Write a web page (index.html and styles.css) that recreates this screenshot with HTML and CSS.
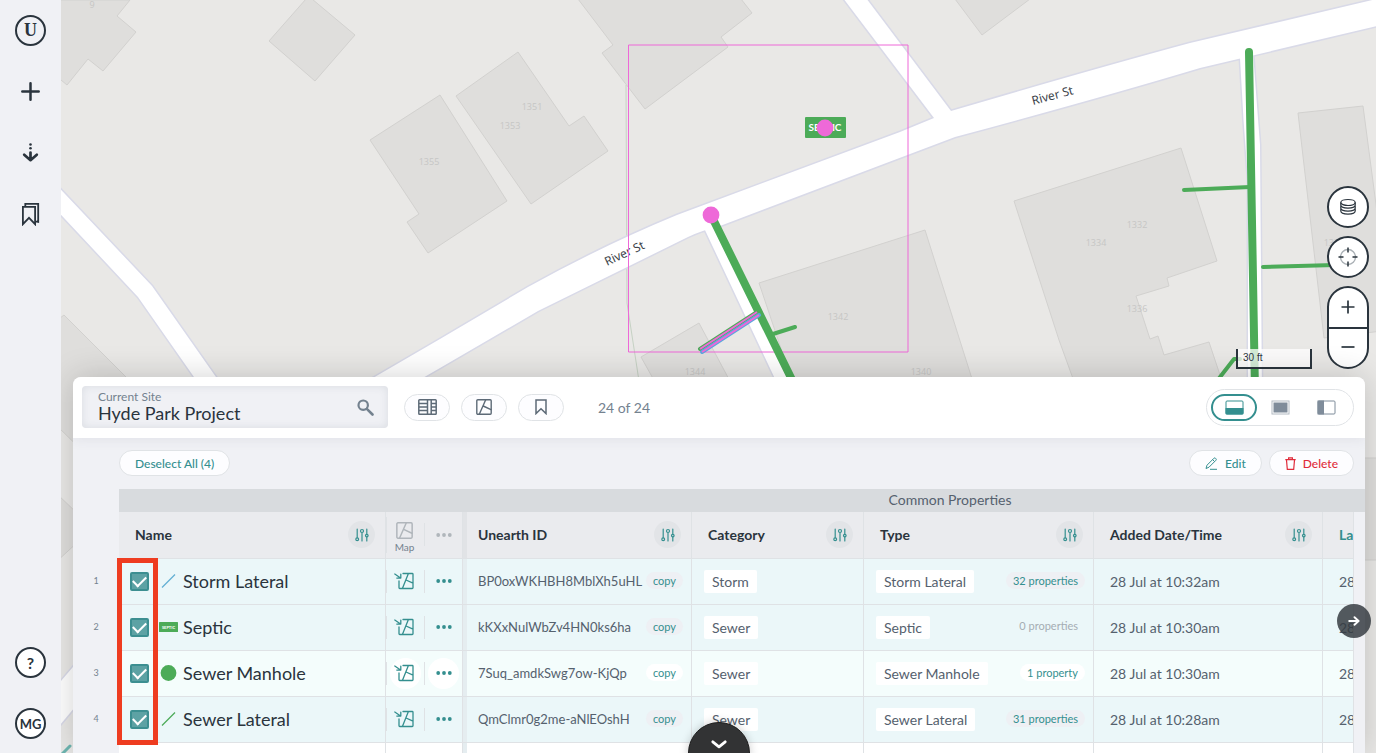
FILE: index.html
```html
<!DOCTYPE html>
<html lang="en">
<head>
<meta charset="utf-8">
<title>Hyde Park Project</title>
<link rel="stylesheet" href="styles.css">
</head>
<body>
<svg class="defs" aria-hidden="true">
  <symbol id="filter" viewBox="0 0 14 14"><g fill="none" stroke="currentColor" stroke-width="1.2" stroke-linecap="round"><path d="M2.2 1v8.6M7 5.2V13M11.8 1v5M11.8 9v4"/><circle cx="2.2" cy="11.2" r="1.4"/><circle cx="7" cy="3" r="1.5"/><circle cx="11.8" cy="7.6" r="1.3"/></g></symbol>
  <symbol id="map" viewBox="0 0 16 16"><g fill="none" stroke="currentColor" stroke-width="1.4" stroke-linejoin="round" stroke-linecap="round"><rect x=".8" y=".8" width="14.4" height="14.4" rx="1"/><path d="M9.6 1 3.4 15M7.2 7 15 10.6"/></g></symbol>
  <symbol id="locate" viewBox="0 0 20 18"><g fill="none" stroke="currentColor" stroke-width="1.3" stroke-linejoin="round" stroke-linecap="round"><path d="M9 1.5h9.2q.8 0 .8.8v13.4q0 .8-.8.8H5.800q-.8 0-.8-.8V9M14.300 1.700 8.500 16.300M12 8 19 11.200M.8 2l5.400 3.700M6.800 2.200v3.900H2.800"/></g></symbol>
  <symbol id="dots" viewBox="0 0 16 4"><g fill="currentColor"><circle cx="2.200" cy="2" r="1.900"/><circle cx="8" cy="2" r="1.900"/><circle cx="13.800" cy="2" r="1.900"/></g></symbol>
</svg>
<div class="app">
  <nav class="rail" aria-label="Main">
    <button class="rail-btn ring logo" aria-label="Home">U</button>
    <button class="rail-btn" aria-label="Add"><svg width="19" height="19" viewBox="0 0 19 19"><path d="M9.500 1.300v16.400M1.300 9.500h16.400" stroke="currentColor" stroke-width="2.500" stroke-linecap="round"/></svg></button>
    <button class="rail-btn" aria-label="Import"><svg width="17" height="19" viewBox="0 0 17 19"><g fill="currentColor"><circle cx="8.500" cy="1.500" r="1.300"/><circle cx="8.500" cy="5.200" r="1.300"/></g><path d="M8.500 9.500v7.500M2.200 11.700 8.500 17.200l6.300-5.500" fill="none" stroke="currentColor" stroke-width="2.700" stroke-linecap="round" stroke-linejoin="round"/></svg></button>
    <button class="rail-btn" aria-label="Bookmarks"><svg width="19" height="25" viewBox="0 0 19 25"><path d="M1.900 5.800h12.200v17.400L8 16.800l-6.100 6.400zM4.300 5.500V2.900H17.200V20.800l-2.700-.5" fill="none" stroke="currentColor" stroke-width="1.800"/></svg></button>
    <span class="space"></span>
    <button class="rail-btn ring help" aria-label="Help">?</button>
    <button class="rail-btn ring user" aria-label="Account">MG</button>
  </nav>
  <main class="stage">
    <svg class="canvas" viewBox="61 0 1315 753" preserveAspectRatio="xMinYMin slice" role="img" aria-label="Site map">
      <g class="building">
        <path d="M55 0H130L117 16 136 32 103 71 88 59 67 85 55 75z"/>
        <path d="M306-1 269 41 315 81 355 35 312-1z"/>
        <path d="M370 140 440 95 507 201 428 253 407 222 419 214z"/>
        <path d="M456 96 518 52 569 126 584 116 608 151 531 204z"/>
        <path d="M578-1 613 45 602 53 645 109 728 47 721 37 752 13 741-1z"/>
        <path d="M955-1 982 35 1030-1z"/>
        <path d="M759 283 925 230 985 420H805z"/>
        <path d="M641 357 699 323 740 400H665z"/>
        <path d="M1014 201 1181 148 1217 261 1167 278 1169 286 1136 296 1150 339 1158 336 1164 355 1209 342 1235 420H1088L1059 340z"/>
        <path d="M1298 113 1363 106 1382 250V331L1324 338z"/>
        <path d="M55 322 64 315 140 391 100 468 55 424z"/>
        <path d="M55 492 80 516V540L55 563z"/>
        <path d="M1350 458H1385V560H1350z"/>
      </g>
      <path class="parcel" d="M626 85 627 303 645 420"/>
      <g class="road-edge">
        <path d="M330 403 440 339 528 287Q602 246 677 215L900 132 951 111Q1090 70 1190 43L1385-3V24L1200 68Q1100 98 955 137L720 226Q700 231 688 237L538 311 440 368 350 420z"/>
        <path d="M843-2H866L951 111 958 130H942L934 118z"/>
        <path d="M50 178 152 286 230 397H208L138 297 50 203z"/>
        <path d="M704 228 785 400H798L722 240z"/>
        <path d="M1240 58Q1243 120 1248 180V400H1262L1260 145 1253 53z"/>
        <path d="M50 694 90 647V689L50 737z"/>
      </g>
      <g class="road">
        <path d="M330 403 440 339 528 287Q602 246 677 215L900 132 951 111Q1090 70 1190 43L1385-3V24L1200 68Q1100 98 955 137L720 226Q700 231 688 237L538 311 440 368 350 420z"/>
        <path d="M843-2H866L951 111 958 130H942L934 118z"/>
        <path d="M50 178 152 286 230 397H208L138 297 50 203z"/>
        <path d="M704 228 785 400H798L722 240 718 222z"/>
        <path d="M1240 58Q1243 120 1248 180V400H1262L1260 145 1253 53z"/>
        <path d="M50 694 90 647V689L50 737z"/>
      </g>
      <g class="house-no">
        <text x="92" y="8">9</text><text x="429" y="165">1355</text><text x="532" y="110">1351</text><text x="510" y="129">1353</text>
        <text x="838" y="320">1342</text><text x="695" y="375">1344</text><text x="921" y="375">1340</text><text x="1137" y="228">1332</text>
        <text x="1096" y="246">1334</text><text x="1137" y="312">1336</text><text x="1334" y="246">1330</text>
      </g>
      <g class="street">
        <text transform="translate(607 266) rotate(-25)">River St</text>
        <text transform="translate(1033 105) rotate(-15)">River St</text>
      </g>
      <path class="area" d="M628.500 45H908V352H628.500z"/>
      <g class="pipe">
        <path class="pipe-main" d="M711 215 798 392M1249 52 1255 392"/>
        <path class="pipe-side" d="M1184 190 1250 187M1263 267 1335 265M773 334 795 327M1210 390 1234 359H1240M700 349 757 312"/>
      </g>
      <path class="storm" d="M702 352 759 315"/>
      <path class="picked" d="M700 349 757 312M702 352 759 315"/>
      <path class="storm-off" d="M60 756 70 746"/>
      <rect class="tag" x="805" y="117" width="41" height="21" rx="1"/>
      <text class="tag-text" x="825" y="131">SEPTIC</text>
      <g class="pin"><circle cx="825" cy="128" r="8.400"/><circle cx="711" cy="215" r="8.400"/></g>
    </svg>

    <div class="scale">30 ft</div>
    <div class="controls">
      <button class="ctl" aria-label="Layers"><svg width="18" height="18" viewBox="0 0 18 18" fill="none" stroke="currentColor" stroke-width="1.200"><ellipse cx="9" cy="4.500" rx="7.200" ry="3"/><path d="M1.800 4.500v2.600c0 1.700 3.200 3 7.200 3s7.200-1.300 7.200-3V4.500M1.800 7.500v2.600c0 1.700 3.200 3 7.200 3s7.200-1.300 7.200-3V7.500M1.800 10.500v2.600c0 1.700 3.200 3 7.200 3s7.200-1.300 7.200-3V10.500"/></svg></button>
      <button class="ctl" aria-label="My location"><svg width="20" height="20" viewBox="0 0 20 20" fill="none"><circle cx="10" cy="10" r="7.500" stroke="#aab0b5" stroke-width="1.400"/><path d="M10 .5v5M10 14.500v5M.5 10h5M14.500 10h5" stroke="currentColor" stroke-width="1.500"/></svg></button>
      <div class="zoom">
        <button aria-label="Zoom in"><svg width="14" height="14" viewBox="0 0 14 14"><path d="M7 .5v13M.5 7h13" stroke="currentColor" stroke-width="1.700"/></svg></button>
        <button aria-label="Zoom out"><svg width="14" height="14" viewBox="0 0 14 14"><path d="M.5 7h13" stroke="currentColor" stroke-width="1.700"/></svg></button>
      </div>
    </div>

    <section class="panel">
      <header class="toolbar">
        <button class="site">
          <span class="site-text"><span class="site-label">Current Site</span><span class="site-name">Hyde Park Project</span></span>
          <svg width="17" height="17" viewBox="0 0 17 17" fill="none" stroke="currentColor"><circle cx="6.200" cy="6.200" r="4.700" stroke-width="2.200"/><path d="M9.800 9.800 15.500 15.500" stroke-width="2.600" stroke-linecap="round"/></svg>
        </button>
        <div class="tools">
          <button class="pill tool" aria-label="Table"><svg width="19" height="16" viewBox="0 0 19 16" fill="none" stroke="currentColor" stroke-width="1.500"><rect x=".8" y=".8" width="17.400" height="14.400" rx=".8"/><path d="M9.500 1v14M13.200 1v14M1 4.500h8.500M1 8h8.500M1 11.500h8.500M13.200 4.500H18M13.200 8H18M13.200 11.500H18"/></svg></button>
          <button class="pill tool" aria-label="Map"><svg width="16" height="16"><use href="#map"/></svg></button>
          <button class="pill tool" aria-label="Bookmark"><svg width="12" height="16" viewBox="0 0 12 16"><path d="M1 1h10v13.600L6 9.800l-5 4.800z" fill="none" stroke="currentColor" stroke-width="1.500"/></svg></button>
        </div>
        <span class="count">24 of 24</span>
        <div class="views">
          <button class="view on" aria-label="Split view"><svg width="19" height="15" viewBox="0 0 19 15"><rect x="1" y="1" width="17" height="13" rx="1" fill="none" stroke="currentColor"/><path d="M.5 8h18v5.500q0 1-1 1h-16q-1 0-1-1z" fill="currentColor"/></svg></button>
          <button class="view" aria-label="Full view"><svg width="19" height="15" viewBox="0 0 19 15"><rect x="1" y="1" width="17" height="13" fill="none" stroke="currentColor" opacity=".6"/><rect x="2.500" y="2.500" width="14" height="10" fill="currentColor"/></svg></button>
          <button class="view" aria-label="Side view"><svg width="19" height="15" viewBox="0 0 19 15"><rect x="1" y="1" width="17" height="13" rx="1" fill="none" stroke="currentColor"/><path d="M.5.5H7v14H.5z" fill="currentColor"/></svg></button>
        </div>
      </header>
      <div class="actions">
        <button class="pill action">Deselect All (4)</button>
        <span class="space"></span>
        <button class="pill action"><svg width="13" height="13" viewBox="0 0 13 13" fill="none" stroke="currentColor" stroke-linejoin="round"><path d="M1 11.500 2 8.200 9 1.200q.7-.6 1.400 0l.6.600q.6.700 0 1.400L4 10.200zM7.600 2.600l2 2M5 12.300h7"/></svg>Edit</button>
        <button class="pill action danger"><svg width="11" height="13" viewBox="0 0 11 13" fill="none" stroke="currentColor" stroke-width="1.200"><path d="M.3 2.600h10.400M3.600 2.300V.8h3.800v1.500M1.500 3l.8 9.300h6.400L9.500 3"/></svg>Delete</button>
      </div>
      <table class="grid">
        <colgroup><col class="c-num"><col class="c-name"><col class="c-tools"><col class="c-gap"><col class="c-id"><col class="c-cat"><col class="c-type"><col class="c-date"><col><col class="c-end"></colgroup>
        <thead>
          <tr class="band"><td class="num"></td><td colspan="3"></td><th colspan="6" scope="colgroup">Common Properties</th></tr>
          <tr class="heads">
            <td class="num"></td>
            <th scope="col"><div class="head">Name<button class="filter" aria-label="Filter name"><svg width="14" height="14"><use href="#filter"/></svg></button></div></th>
            <td class="tools-cell"><div class="pair"><span class="slot map-head"><svg width="17" height="17"><use href="#map"/></svg><span class="map-label">Map</span></span><span class="slot"><svg width="16" height="4"><use href="#dots"/></svg></span></div></td>
            <td class="gap"></td>
            <th scope="col" class="id"><div class="head">Unearth ID<button class="filter" aria-label="Filter ID"><svg width="14" height="14"><use href="#filter"/></svg></button></div></th>
            <th scope="col"><div class="head">Category<button class="filter" aria-label="Filter category"><svg width="14" height="14"><use href="#filter"/></svg></button></div></th>
            <th scope="col"><div class="head">Type<button class="filter" aria-label="Filter type"><svg width="14" height="14"><use href="#filter"/></svg></button></div></th>
            <th scope="col"><div class="head">Added Date/Time<button class="filter" aria-label="Filter date"><svg width="14" height="14"><use href="#filter"/></svg></button></div></th>
            <th scope="col" class="cut sorted">La</th>
            <td class="end"></td>
          </tr>
        </thead>
        <tbody>
          <tr>
            <td class="num">1</td>
            <td><div class="name"><input type="checkbox" checked id="r1"><svg width="18" height="18" viewBox="0 0 18 18"><path d="M2.500 15.500 15.500 2.500" stroke="#62afd4" stroke-width="1.300"/></svg><label for="r1">Storm Lateral</label></div></td>
            <td class="tools-cell"><div class="pair"><button class="slot" aria-label="Show on map"><span class="dot locate"><svg width="20" height="18"><use href="#locate"/></svg></span></button><button class="slot" aria-label="More"><span class="dot"><svg width="16" height="4"><use href="#dots"/></svg></span></button></div></td>
            <td class="gap"></td>
            <td class="id"><div class="cell">BP0oxWKHBH8MblXh5uHL<button class="mini">copy</button></div></td>
            <td class="chips"><span class="chip">Storm</span></td>
            <td class="chips"><div class="cell"><span class="chip">Storm Lateral</span><button class="mini">32 properties</button></div></td>
            <td>28 Jul at 10:32am</td><td class="cut">28</td><td class="end"></td>
          </tr>
          <tr>
            <td class="num">2</td>
            <td><div class="name"><input type="checkbox" checked id="r2"><svg width="19" height="10" viewBox="0 0 19 10"><rect width="19" height="10" rx=".5" fill="#4cab58"/><text class="tiny" x="9.500" y="7">SEPTIC</text></svg><label for="r2">Septic</label></div></td>
            <td class="tools-cell"><div class="pair"><button class="slot" aria-label="Show on map"><span class="dot locate"><svg width="20" height="18"><use href="#locate"/></svg></span></button><button class="slot" aria-label="More"><span class="dot"><svg width="16" height="4"><use href="#dots"/></svg></span></button></div></td>
            <td class="gap"></td>
            <td class="id"><div class="cell">kKXxNulWbZv4HN0ks6ha<button class="mini">copy</button></div></td>
            <td class="chips"><span class="chip">Sewer</span></td>
            <td class="chips"><div class="cell"><span class="chip">Septic</span><span class="mini none">0 properties</span></div></td>
            <td>28 Jul at 10:30am</td><td class="cut">28</td><td class="end"></td>
          </tr>
          <tr class="hover">
            <td class="num">3</td>
            <td><div class="name"><input type="checkbox" checked id="r3"><svg width="18" height="18" viewBox="0 0 18 18"><circle cx="9" cy="9" r="7.900" fill="#4cab58"/></svg><label for="r3">Sewer Manhole</label></div></td>
            <td class="tools-cell"><div class="pair"><button class="slot" aria-label="Show on map"><span class="dot locate"><svg width="20" height="18"><use href="#locate"/></svg></span></button><button class="slot" aria-label="More"><span class="dot"><svg width="16" height="4"><use href="#dots"/></svg></span></button></div></td>
            <td class="gap"></td>
            <td class="id"><div class="cell">7Suq_amdkSwg7ow-KjQp<button class="mini">copy</button></div></td>
            <td class="chips"><span class="chip">Sewer</span></td>
            <td class="chips"><div class="cell"><span class="chip">Sewer Manhole</span><button class="mini">1 property</button></div></td>
            <td>28 Jul at 10:30am</td><td class="cut">28</td><td class="end"></td>
          </tr>
          <tr>
            <td class="num">4</td>
            <td><div class="name"><input type="checkbox" checked id="r4"><svg width="18" height="18" viewBox="0 0 18 18"><path d="M2.500 15.500 15.500 2.500" stroke="#4cab58" stroke-width="1.300"/></svg><label for="r4">Sewer Lateral</label></div></td>
            <td class="tools-cell"><div class="pair"><button class="slot" aria-label="Show on map"><span class="dot locate"><svg width="20" height="18"><use href="#locate"/></svg></span></button><button class="slot" aria-label="More"><span class="dot"><svg width="16" height="4"><use href="#dots"/></svg></span></button></div></td>
            <td class="gap"></td>
            <td class="id"><div class="cell">QmClmr0g2me-aNlEOshH<button class="mini">copy</button></div></td>
            <td class="chips"><span class="chip">Sewer</span></td>
            <td class="chips"><div class="cell"><span class="chip">Sewer Lateral</span><button class="mini">31 properties</button></div></td>
            <td>28 Jul at 10:28am</td><td class="cut">28</td><td class="end"></td>
          </tr>
          <tr class="blank"><td class="num"></td><td></td><td></td><td class="gap"></td><td></td><td></td><td></td><td></td><td></td><td class="end"></td></tr>
        </tbody>
      </table>
      <div class="highlight"></div>
    </section>
    <button class="next" aria-label="Scroll right"><svg width="12" height="10" viewBox="0 0 12 10"><path d="M1.200 5h9M6.500 1.200 10.600 5 6.500 8.800" fill="none" stroke="currentColor" stroke-width="1.900" stroke-linecap="round" stroke-linejoin="round"/></svg></button>
    <button class="collapse" aria-label="Collapse panel"><svg width="16" height="9" viewBox="0 0 16 9"><path d="M1.800 1.800 8 6.800 14.200 1.800" fill="none" stroke="currentColor" stroke-width="2.800" stroke-linecap="round" stroke-linejoin="round"/></svg></button>
  </main>
</div>
</body>
</html>
```
FILE: styles.css
```css
:root {
  --ink: #2a343d;
  --slate: #55616e;
  --grey: #74828f;
  --teal: #348f8f;
  --panel: #f0f1f5;
  --line: #dfe2e5;
  --green: #4cab58;
  --pink: #ee69d8;
}
* { box-sizing: border-box; }
body { margin: 0; font-family: Lato, "Open Sans", sans-serif; color: var(--ink); }
button { border: 0; padding: 0; background: none; font: inherit; color: inherit; cursor: pointer; }
svg { display: block; flex: none; }
.defs { position: absolute; width: 0; height: 0; }
.space { flex: 1; }
.app { display: flex; height: 100vh; overflow: hidden; }

.rail { flex: none; width: 61px; padding: 15px 0 14px; display: flex; flex-direction: column; align-items: center; gap: 30px; background: var(--panel); }
.rail-btn { width: 31px; height: 31px; display: grid; place-items: center; }
.ring { border: 2px solid var(--ink); border-radius: 50%; background: #fff; font-weight: 700; }
.logo { background: none; font-family: "Liberation Serif", serif; font-size: 18px; }
.help { font-size: 16px; }
.user { font-size: 13px; }

.stage { flex: 1; min-width: 0; position: relative; overflow: hidden; background: #e9e8e6; }
.canvas { width: 100%; height: 100%; }
.building { fill: #dfdedc; stroke: #d2d1cf; }
.parcel { fill: none; stroke: #c6d2c4; }
.road { fill: #fff; }
.road-edge { fill: #fff; stroke: #d9dae8; stroke-width: 3; }
.house-no { fill: #c6c6c5; font-size: 9px; font-family: "Open Sans", sans-serif; text-anchor: middle; }
.street { fill: #3c434a; font-size: 12px; font-family: "Noto Sans", sans-serif; }
.area { fill: none; stroke: var(--pink); }
.pipe { fill: none; stroke: var(--green); stroke-linecap: round; stroke-linejoin: round; }
.pipe-main { stroke-width: 8; }
.pipe-side { stroke-width: 4; }
.storm { stroke: #5aa6de; stroke-width: 4; stroke-linecap: round; }
.storm-off { stroke: #6db5b0; stroke-width: 3; stroke-linecap: round; }
.picked { stroke: var(--pink); stroke-width: 2; }
.tag { fill: var(--green); }
.tag-text { fill: #fff; font-size: 10px; font-weight: 700; text-anchor: middle; }
.pin { fill: var(--pink); }

.scale { position: absolute; right: 64px; bottom: calc(50% + 8px); width: 76px; height: 20px; padding: 2px 5px; border: 2px solid var(--ink); border-top: 0; background: rgba(255, 255, 255, .75); font: 10px/14px "Liberation Sans", sans-serif; }
.controls { position: absolute; right: 7px; bottom: calc(50% + 8px); display: grid; gap: 8px; }
.ctl, .zoom { width: 42px; border: 2px solid var(--ink); border-radius: 21px; background: #fff; }
.ctl { height: 42px; display: grid; place-items: center; }
.zoom { height: 83px; display: grid; grid-template-rows: 1fr 1fr; }
.zoom button { display: grid; place-items: center; }
.zoom button + button { border-top: 2px solid var(--ink); padding-bottom: 2px; }

.panel { position: absolute; left: 12px; right: 11px; bottom: 0; height: 50%; overflow: hidden; border-radius: 8px 8px 0 0; background: var(--panel); box-shadow: 0 0 32px rgba(0, 0, 0, .18); }
.toolbar { display: flex; align-items: center; height: 61px; padding: 0 11px 0 9px; background: #fff; box-shadow: 0 2px 12px rgba(60, 70, 90, .08); }
.site { width: 306px; height: 42px; padding: 0 14px 0 16px; display: flex; align-items: center; justify-content: space-between; border-radius: 4px; background: var(--panel); box-shadow: inset 0 0 8px rgba(60, 70, 90, .12); color: var(--grey); text-align: left; }
.site-text { display: grid; padding-bottom: 2px; }
.site-label { font-size: 12px; line-height: 14px; }
.site-name { font-size: 18px; line-height: 18px; color: var(--ink); }
.tools { display: flex; gap: 11px; margin-left: 16px; }
.pill { display: flex; align-items: center; justify-content: center; border: 1px solid #e0e3e6; border-radius: 14px; background: #fdfdff; }
.tool { width: 46px; height: 27px; color: #5d6a77; }
.count { margin-left: 34px; font-size: 14px; color: var(--grey); }
.views { margin-left: auto; display: flex; padding: 4px; border: 1px solid #e0e3e6; border-radius: 19px; }
.view { width: 46px; height: 27px; display: grid; place-items: center; border-radius: 14px; color: #7f8c9a; }
.view.on { border: 2px solid var(--teal); color: var(--teal); }

.actions { display: flex; align-items: center; gap: 7px; height: 51px; padding: 0 11px 0 46px; }
.action { height: 26px; padding: 0 15px; gap: 7px; font-size: 12px; font-weight: 500; color: var(--teal); }
.danger { color: #e02b3a; }

.grid { width: 100%; table-layout: fixed; border-collapse: separate; border-spacing: 0; font-size: 14px; color: var(--slate); }
.c-num { width: 46px; }
.c-name { width: 267px; }
.c-tools { width: 77px; }
.c-gap { width: 4px; }
.c-id { width: 225px; }
.c-cat { width: 172px; }
.c-type { width: 230px; }
.c-date { width: 229px; }
.c-end { width: 11px; }
.grid td, .grid th { padding: 0 0 0 16px; text-align: left; border-right: 1px solid var(--line); border-bottom: 1px solid var(--line); white-space: nowrap; }
.grid .band > * { height: 23px; padding: 0; border: 0; background: #d8dbde; }
.grid .band th { padding: 0 0 2px 68px; text-align: center; font-weight: 400; }
.grid .heads > * { height: 47px; background: #eaebee; color: var(--ink); }
.grid tbody td { height: 46px; background: #ebf7f9; }
.grid tbody td:nth-child(2) { padding-left: 11px; }
.grid tbody td.chips { padding-left: 12px; }
.grid tr .id.id { padding-left: 11px; }
.grid tbody .id { font-size: 13px; }
.grid tbody .hover td { background: #f4fdfc; }
.grid tbody .blank td { background: #fff; }
.grid tr .num.num { padding: 0 0 3px; border: 0; background: var(--panel); font-size: 9px; text-align: center; color: var(--grey); }
.grid tr .gap.gap { padding: 0; border-right: 0; background: #e5edf0; }
.grid .heads .gap.gap { background: #e1e3e6; }
.grid tr .end.end { padding: 0; border: 0; background: var(--panel); }
.grid .cut { overflow: hidden; }
.grid .heads .sorted { color: var(--teal); }
.grid tr .tools-cell.tools-cell { padding: 0; }

.head { display: flex; align-items: center; justify-content: space-between; padding-right: 10px; }
.filter { width: 27px; height: 27px; display: grid; place-items: center; border-radius: 50%; background: #e2e4e7; color: var(--teal); }
.pair { display: flex; align-items: center; }
.slot { width: 38px; height: 23px; display: grid; place-items: center; border-left: 1px solid var(--line); color: var(--teal); }
.dot { flex: none; width: 31px; height: 31px; margin: -4px; display: grid; place-items: center; border-radius: 50%; }
.locate { padding-right: 3px; }
.hover .dot { background: #fff; }
.heads .slot { color: #b0b6bb; }
.grid .map-head { height: 36px; align-content: center; padding: 5px 2px 0 0; }
.map-label { margin-top: 2px; font-size: 10px; line-height: 12px; color: var(--grey); }
.name { display: flex; align-items: center; gap: 5px; font-size: 18px; color: var(--ink); }
.name svg { width: 19px; }
.name input { appearance: none; flex: none; width: 19px; height: 19px; margin: 0 5px 0 0; border: 2px solid #3c8f91; border-radius: 2px; background: #5da2a4; display: grid; place-items: center; }
.name input:checked::after { content: ""; width: 11px; height: 6px; margin-bottom: 3px; border: solid #fff; border-width: 0 0 2px 2px; rotate: -45deg; }
.tiny { fill: #fff; font-size: 4px; font-weight: 700; text-anchor: middle; }
.cell { display: flex; align-items: center; justify-content: space-between; padding-right: 8px; }
.chip { display: inline-block; padding: 0 8px; line-height: 23px; border-radius: 2px; background: #fff; }
.mini { height: 17px; margin-bottom: 2px; padding: 0 7px; border-radius: 9px; background: #eef0f4; font-size: 11px; line-height: 15px; color: var(--teal); }
.hover .mini { background: #fff; }
.mini.none { background: none; color: #a5adb3; }

.highlight { position: absolute; left: 44px; top: 181px; width: 41px; height: 187px; border: 5px solid #ee3c20; pointer-events: none; }
.next { position: absolute; right: 5px; bottom: 115px; width: 34px; height: 34px; display: grid; place-items: center; border-radius: 50%; background: rgba(52, 58, 64, .84); color: #fff; }
.collapse { position: absolute; left: 50%; bottom: -31px; width: 62px; height: 62px; padding-top: 17px; display: grid; justify-items: center; align-content: start; border: 1px solid #1f1f1f; border-radius: 50%; background: #323334; color: #fff; box-shadow: 0 0 10px rgba(0, 0, 0, .2); translate: -50%; }
```
